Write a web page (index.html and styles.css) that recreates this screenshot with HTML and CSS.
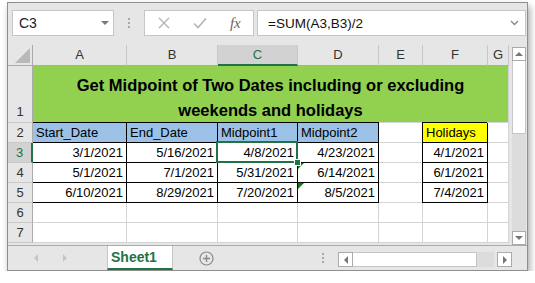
FILE: index.html
```html
<!DOCTYPE html>
<html lang="en">
<head>
    <meta charset="UTF-8">
    <meta name="viewport" content="width=device-width, initial-scale=1.0">
    <title>Midpoint of Two Dates</title>
    <link rel="stylesheet" href="styles.css">
</head>
<body>
    <div class="window">
        <div class="formula-bar">
            <div class="name-box"><span>C3</span><span class="caret"></span></div>
            <div class="grip"><i></i><i></i><i></i></div>
            <div class="fx-box">
                <span class="fx-btn">
                    <svg width="12" height="12" viewBox="0 0 12 12"><path d="M1 1L11 11M11 1L1 11" stroke="#b4b4b4" stroke-width="1.4" fill="none"/></svg>
                </span>
                <span class="fx-btn">
                    <svg width="14" height="12" viewBox="0 0 14 12"><path d="M1 6.5L5 10.5L13 1.5" stroke="#b4b4b4" stroke-width="1.6" fill="none"/></svg>
                </span>
                <span class="fx-btn fx">fx</span>
            </div>
            <div class="formula">
                <span>=SUM(A3,B3)/2</span>
                <svg class="chev" width="9" height="6" viewBox="0 0 9 6"><path d="M1 1L4.5 4.5L8 1" stroke="#8a8a8a" stroke-width="1.4" fill="none"/></svg>
            </div>
        </div>

        <div class="main">
            <div class="grid">
                <div class="hd corner">
                    <svg width="15" height="15" viewBox="0 0 15 15"><polygon points="15,0 15,15 0,15" fill="#b9b9b9"/></svg>
                </div>
                <div class="hd">A</div>
                <div class="hd">B</div>
                <div class="hd active">C</div>
                <div class="hd">D</div>
                <div class="hd">E</div>
                <div class="hd">F</div>
                <div class="hd">G</div>

                <div class="rh bottom">1</div>
                <div class="title">Get Midpoint of Two Dates including or excluding<br>weekends and holidays</div>

                <div class="rh">2</div>
                <div class="c blue b">Start_Date</div>
                <div class="c blue b">End_Date</div>
                <div class="c blue b">Midpoint1</div>
                <div class="c blue b">Midpoint2</div>
                <div class="c"></div>
                <div class="c yellow b bl">Holidays</div>
                <div class="c"></div>

                <div class="rh active">3</div>
                <div class="c n b">3/1/2021</div>
                <div class="c n b">5/16/2021</div>
                <div class="c n b sel">4/8/2021</div>
                <div class="c n b">4/23/2021</div>
                <div class="c"></div>
                <div class="c n b bl">4/1/2021</div>
                <div class="c"></div>

                <div class="rh">4</div>
                <div class="c n b">5/1/2021</div>
                <div class="c n b">7/1/2021</div>
                <div class="c n b">5/31/2021</div>
                <div class="c n b tri">6/14/2021</div>
                <div class="c"></div>
                <div class="c n b bl">6/1/2021</div>
                <div class="c"></div>

                <div class="rh">5</div>
                <div class="c n b">6/10/2021</div>
                <div class="c n b">8/29/2021</div>
                <div class="c n b">7/20/2021</div>
                <div class="c n b tri">8/5/2021</div>
                <div class="c"></div>
                <div class="c n b bl">7/4/2021</div>
                <div class="c"></div>

                <div class="rh">6</div>
                <div class="c"></div><div class="c"></div><div class="c"></div><div class="c"></div>
                <div class="c"></div><div class="c"></div><div class="c"></div>

                <div class="rh">7</div>
                <div class="c"></div><div class="c"></div><div class="c"></div><div class="c"></div>
                <div class="c"></div><div class="c"></div><div class="c"></div>
            </div>

            <div class="vscroll">
                <div class="sbtn"><span class="arr up"></span></div>
                <div class="vthumb"></div>
                <div class="vtrack"></div>
                <div class="sbtn"><span class="arr down"></span></div>
            </div>
        </div>

        <div class="tabs">
            <div class="tab-nav"><span class="nav-l"></span><span class="nav-r"></span></div>
            <div class="tab">Sheet1</div>
            <div class="add">
                <svg width="15" height="15" viewBox="0 0 15 15"><circle cx="7.5" cy="7.5" r="6.5" stroke="#8a8a8a" stroke-width="1.2" fill="none"/><path d="M7.5 4V11M4 7.5H11" stroke="#8a8a8a" stroke-width="1.4"/></svg>
            </div>
            <div class="grip tab-grip"><i></i><i></i><i></i></div>
            <div class="hscroll">
                <div class="sbtn"><span class="arr left"></span></div>
                <div class="hthumb"></div>
                <div class="htrack"></div>
                <div class="sbtn right-btn"><span class="arr right"></span></div>
            </div>
        </div>
    </div>
</body>
</html>
```

FILE: styles.css
```css
body {
    margin: 0;
    background: #ffffff;
    font-family: "Liberation Sans", Arial, sans-serif;
}

.window {
    box-sizing: border-box;
    width: 521px;
    height: 269px;
    margin: 2px 0 0 7px;
    border: 1px solid #8f8f8f;
    background-color: #e6e6e6;
    box-shadow: 2px 4px 7px rgba(0, 0, 0, 0.35);
}

/* formula bar */

.formula-bar {
    height: 42px;
    display: flex;
    align-items: flex-start;
    padding-top: 7px;
    box-sizing: border-box;
}

.name-box,
.fx-box,
.formula {
    box-sizing: border-box;
    height: 26px;
    background-color: #ffffff;
    border: 1px solid #c6c6c6;
}

.name-box {
    width: 102px;
    margin-left: 4px;
    display: flex;
    align-items: center;
    justify-content: space-between;
    padding: 0 4px 0 6px;
    font-size: 14px;
    color: #222222;
}

.caret {
    width: 0;
    height: 0;
    border-left: 4px solid transparent;
    border-right: 4px solid transparent;
    border-top: 4px solid #7a7a7a;
}

.grip {
    width: 30px;
    height: 26px;
    display: flex;
    flex-direction: column;
    align-items: center;
    justify-content: center;
    gap: 2px;
}

.grip i {
    display: block;
    width: 2px;
    height: 2px;
    background-color: #a8a8a8;
}

.fx-box {
    width: 110px;
    display: flex;
    align-items: center;
}

.fx-btn {
    display: flex;
    justify-content: center;
    align-items: center;
    width: 36px;
}

.fx-btn:first-child {
    width: 38px;
}

.fx {
    font-family: "Liberation Serif", serif;
    font-style: italic;
    font-size: 15px;
    color: #666666;
}

.formula {
    flex: 1;
    margin: 0 1px 0 3px;
    display: flex;
    align-items: center;
    justify-content: space-between;
    padding: 0 6px 0 10px;
    font-size: 13.5px;
    color: #111111;
}

/* sheet */

.main {
    display: flex;
    height: 200px;
}

.grid {
    display: grid;
    grid-template-columns: 25px 94px 91px 80px 81px 44px 65px 21px;
    grid-template-rows: 21px 57px repeat(6, 20px);
    font-size: 13px;
}

.grid > div {
    box-sizing: border-box;
    white-space: nowrap;
    overflow: hidden;
}

.hd {
    background-color: #e6e6e6;
    border-right: 1px solid #c8c8c8;
    border-bottom: 1px solid #ababab;
    text-align: center;
    line-height: 20px;
    color: #333333;
}

.hd.active {
    background-color: #d2d2d2;
    border-bottom: 2px solid #217346;
    color: #217346;
}

.corner {
    display: flex;
    align-items: flex-end;
    justify-content: flex-end;
    padding: 0 2px 2px 0;
    border-right-color: #ababab;
}

.rh {
    background-color: #e6e6e6;
    border-right: 1px solid #ababab;
    border-bottom: 1px solid #c8c8c8;
    text-align: center;
    line-height: 19px;
    color: #333333;
}

.rh.bottom {
    display: flex;
    align-items: flex-end;
    justify-content: center;
    padding-bottom: 1px;
}

.rh.active {
    background-color: #d2d2d2;
    border-right: 2px solid #217346;
    color: #217346;
}

.title {
    grid-column: 2 / span 7;
    background-color: #92d050;
    border-right: 1px solid #d4d4d4;
    border-bottom: 1px solid #d4d4d4;
    text-align: center;
    font-weight: bold;
    font-size: 16.5px;
    line-height: 25px;
    padding-top: 7px;
    color: #000000;
}

.c {
    background-color: #ffffff;
    border-right: 1px solid #d4d4d4;
    border-bottom: 1px solid #d4d4d4;
    line-height: 19px;
    padding: 0 3px;
    color: #000000;
}

.n {
    text-align: right;
}

.b {
    border-right-color: #000000;
    border-bottom-color: #000000;
    box-shadow: 0 -1px 0 #000000;
}

.bl {
    box-shadow: -1px -1px 0 #000000, -1px 0 0 #000000;
}

.blue {
    background-color: #9bc2e6;
}

.yellow {
    background-color: #ffff00;
}

.sel {
    position: relative;
    overflow: visible !important;
    z-index: 1;
}

.sel::after {
    content: "";
    position: absolute;
    top: -2px;
    left: -2px;
    right: -1px;
    bottom: -1px;
    border: 2px solid #217346;
}

.sel::before {
    content: "";
    position: absolute;
    right: -4px;
    bottom: -4px;
    width: 5px;
    height: 5px;
    background-color: #217346;
    border: 1px solid #ffffff;
    z-index: 2;
}

.tri {
    position: relative;
}

.tri::before {
    content: "";
    position: absolute;
    top: 0;
    left: 0;
    border-top: 6px solid #0f7b0f;
    border-right: 6px solid transparent;
}

/* scroll bars */

.vscroll {
    width: 14px;
    height: 198px;
    margin: 2px 1px 0 3px;
    display: flex;
    flex-direction: column;
}

.sbtn {
    box-sizing: border-box;
    width: 15px;
    height: 15px;
    background-color: #ffffff;
    border: 1px solid #ababab;
    display: flex;
    align-items: center;
    justify-content: center;
}

.vscroll .sbtn {
    width: 14px;
    height: 14px;
}

.vthumb {
    height: 73px;
    box-sizing: border-box;
    background-color: #ffffff;
    border: 1px solid #c6c6c6;
    border-top: none;
}

.vtrack {
    flex: 1;
    background-color: #dcdcdc;
}

.arr {
    width: 0;
    height: 0;
}

.arr.up {
    border-left: 4px solid transparent;
    border-right: 4px solid transparent;
    border-bottom: 4px solid #777777;
}

.arr.down {
    border-left: 4px solid transparent;
    border-right: 4px solid transparent;
    border-top: 4px solid #777777;
}

.arr.left {
    border-top: 4px solid transparent;
    border-bottom: 4px solid transparent;
    border-right: 4px solid #777777;
}

.arr.right {
    border-top: 4px solid transparent;
    border-bottom: 4px solid transparent;
    border-left: 4px solid #777777;
}

/* sheet tabs */

.tabs {
    height: 25px;
    box-sizing: border-box;
    border-top: 1px solid #ababab;
    display: flex;
    align-items: flex-start;
}

.tab-nav {
    width: 99px;
    height: 24px;
    display: flex;
    align-items: center;
    padding-left: 26px;
    box-sizing: border-box;
}

.nav-l {
    border-top: 4px solid transparent;
    border-bottom: 4px solid transparent;
    border-right: 4px solid #c4c4c4;
}

.nav-r {
    margin-left: 25px;
    border-top: 4px solid transparent;
    border-bottom: 4px solid transparent;
    border-left: 4px solid #c4c4c4;
}

.tab {
    box-sizing: border-box;
    width: 66px;
    height: 24px;
    background-color: #ffffff;
    border-left: 1px solid #c6c6c6;
    border-right: 1px solid #c6c6c6;
    border-bottom: 2px solid #217346;
    padding-left: 3px;
    font-weight: bold;
    font-size: 14px;
    line-height: 22px;
    color: #217346;
}

.add {
    margin: 5px 0 0 26px;
    height: 15px;
}

.tab-grip {
    width: 2px;
    height: 24px;
    margin-left: 108px;
}

.hscroll {
    width: 174px;
    height: 15px;
    margin: 6px 0 0 14px;
    display: flex;
}

.hthumb {
    width: 124px;
    box-sizing: border-box;
    background-color: #ffffff;
    border: 1px solid #c6c6c6;
    border-left: none;
}

.htrack {
    width: 17px;
    background-color: #dcdcdc;
}

.right-btn {
    margin-left: 3px;
}
```
